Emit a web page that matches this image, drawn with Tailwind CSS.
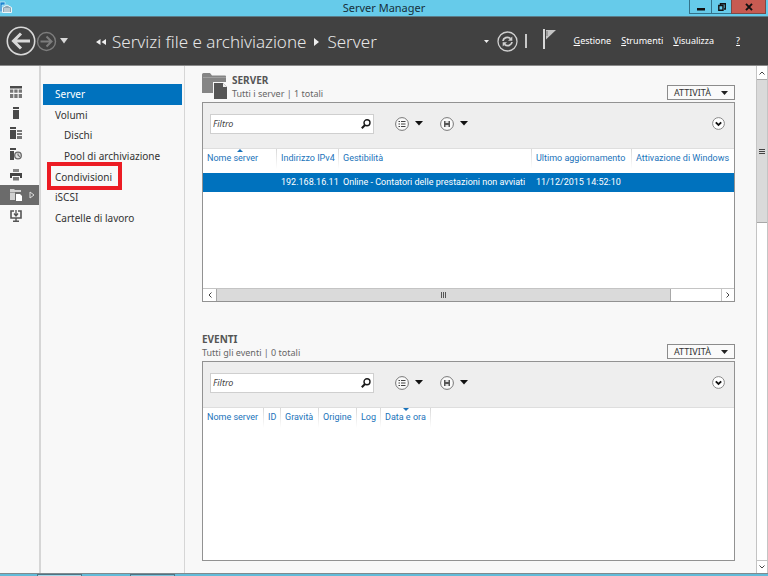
<!DOCTYPE html>
<html lang="it">

<head>
    <meta charset="UTF-8">
    <meta name="viewport" content="width=device-width, initial-scale=1.0">
    <title>Server Manager</title>
    <script src="https://cdn.jsdelivr.net/npm/@tailwindcss/browser@4"></script>
</head>

<body class="h-screen flex flex-col overflow-hidden bg-[#f8f8f8] font-['Noto_Sans',sans-serif] text-[9px] text-[#333]">

    <!-- Title bar -->
    <div class="relative h-4 shrink-0 flex items-start justify-between bg-[#66cbea]">
        <svg class="w-3 h-4" viewBox="0 0 12 16">
            <path d="M0 2h5v3H2v7H0z" fill="#1c86d1" stroke="#e8f6fc" stroke-width=".6"/>
            <path d="M2.500 7.500 7 5l4.500 2.500v5h-9z" fill="#8fa6b3" stroke="#eef7fb"/>
            <path d="M4 9h6M4 11h6" stroke="#e4edf2"/>
        </svg>
        <h1 class="absolute inset-x-0 top-0 text-center text-[11px] leading-4 text-[#16303a]">Server Manager</h1>
        <div class="relative flex h-[14px] mr-[2px]">
            <button aria-label="Riduci a icona" class="w-[23px] flex items-center justify-center border border-t-0 border-[#33728a]">
                <svg class="w-2 h-2" viewBox="0 0 8 8"><path d="M0 5h8v2.500H0z" fill="#111"/></svg>
            </button>
            <button aria-label="Ripristina" class="w-[19px] flex items-center justify-center border-b border-[#33728a]">
                <svg class="w-2 h-2" viewBox="0 0 8 8"><path d="M2.500 2V.7h4.800V6H6M.8 2.500H5v4.700H.8z" fill="none" stroke="#111" stroke-width="1.400"/></svg>
            </button>
            <button aria-label="Chiudi" class="w-[35px] flex items-center justify-center border border-t-0 border-[#7c4a48] bg-[#c75b52]">
                <svg class="w-2 h-2" viewBox="0 0 8 8"><path d="m1 .8 6 6.400M7 .8 1 7.200" stroke="#111" stroke-width="1.900"/></svg>
            </button>
        </div>
    </div>

    <!-- Header -->
    <header class="h-[50px] shrink-0 flex items-center border-t border-b border-t-[#5b7c88] border-b-[#8a8a8a] bg-[#414141] text-[#e6e6e6]">
        <button aria-label="Indietro" class="ml-[6px]">
            <svg class="w-[30px] h-[30px]" viewBox="0 0 30 30" fill="none" stroke="#d8d8d8">
                <circle cx="15" cy="15" r="13.700" stroke-width="1.600"/>
                <path d="M24 15H8M15 7.500 7.500 15l7.500 7.500" stroke-width="3"/>
            </svg>
        </button>
        <button aria-label="Avanti">
            <svg class="w-[21px] h-[21px]" viewBox="0 0 21 21" fill="none" stroke="#7d7d7d">
                <circle cx="10.500" cy="10.500" r="9" stroke-width="1.400"/>
                <path d="M4.500 10.500h11M10.500 5.500l5 5-5 5" stroke-width="2"/>
            </svg>
        </button>
        <button aria-label="Cronologia" class="ml-[3px]">
            <svg class="w-2 h-[6px]" viewBox="0 0 8 6"><path d="M0 0h8L4 5.500z" fill="#d8d8d8"/></svg>
        </button>
        <nav class="ml-7 pt-[2px] flex items-center text-[17px] font-light whitespace-nowrap">
            <svg class="w-[10px] h-2 mr-[6px]" viewBox="0 0 10 8"><path d="M4.500 1v6L0 4zM10 1v6L5.500 4z" fill="#eee"/></svg>
            <a href="#">Servizi file e archiviazione</a>
            <svg class="w-[5px] h-2 mx-2" viewBox="0 0 5 8"><path d="M0 0v8l5-4z" fill="#eee"/></svg>
            <a href="#">Server</a>
        </nav>
        <div class="ml-auto flex items-center">
            <button aria-label="Altri percorsi" class="mr-2">
                <svg class="w-[5px] h-[3px]" viewBox="0 0 5 3"><path d="M0 0h5L2.500 3z" fill="#eee"/></svg>
            </button>
            <button aria-label="Aggiorna">
                <svg class="w-[21px] h-[21px]" viewBox="0 0 21 21" fill="none" stroke="#d0d0d0">
                    <circle cx="10.500" cy="10.500" r="9.500" stroke-width="1.300"/>
                    <path d="M6 10c.3-3 4.500-5 7.500-2.300M15 11c-.3 3-4.500 5-7.500 2.300" stroke-width="1.800"/>
                    <path d="M15.300 5.500v4.300H11zM5.700 15.500v-4.300H10z" fill="#d0d0d0" stroke="none"/>
                </svg>
            </button>
            <span class="w-[2px] h-[14px] ml-[7px] mr-4 bg-[#c8c8c8]"></span>
            <button aria-label="Notifiche">
                <svg class="w-[13px] h-5 -mt-1" viewBox="0 0 13 20"><path d="M0 0h2v20H0z" fill="#d8d8d8"/><path d="M3 1h10L3 10.500z" fill="#c4c4c4"/><path d="M4 2v5" stroke="#777" stroke-width="1"/></svg>
            </button>
            <div class="ml-[18px] mr-7 flex gap-[10px] text-white">
                <button><u>G</u>estione</button>
                <button><u>S</u>trumenti</button>
                <button><u>V</u>isualizza</button>
                <button class="ml-3 underline">?</button>
            </div>
        </div>
    </header>

    <div class="flex-1 min-h-0 flex">

        <!-- Icon rail -->
        <aside class="w-[41px] shrink-0 pt-4 border-r-2 border-[#d6d6d6]">
            <div class="h-36 grid grid-rows-7">
                <a href="#" aria-label="Dashboard" class="flex items-center pl-[10px]">
                    <svg class="w-3 h-3" viewBox="0 0 12 12"><path d="M0 0h12v2.500H0z" fill="#4a4a4a"/><path d="M0 3.500h3.300v3.300H0zM4.300 3.500h3.300v3.300H4.300zM8.700 3.500H12v3.300H8.700zM0 8h3.300v4H0zM4.300 8h3.300v4H4.300zM8.700 8H12v4H8.700z" fill="#777"/></svg>
                </a>
                <a href="#" aria-label="Server locale" class="flex items-center pl-[10px]">
                    <svg class="w-3 h-3" viewBox="0 0 12 12" fill="#4a4a4a"><path d="M3 0h6v2H3zM3 3h6v9H3z"/></svg>
                </a>
                <a href="#" aria-label="Tutti i server" class="flex items-center pl-[10px]">
                    <svg class="w-3 h-3" viewBox="0 0 12 12"><path d="M0 0h6v2H0zM0 3h6v9H0z" fill="#4a4a4a"/><path d="M7 3h5v2H7zM7 6h5v2H7zM7 9h5v3H7z" fill="#777"/></svg>
                </a>
                <a href="#" aria-label="Servizi" class="flex items-center pl-[10px]">
                    <svg class="w-3 h-3" viewBox="0 0 12 12"><path d="M0 0h6v2H0zM0 3h4v9H0z" fill="#4a4a4a"/><circle cx="8" cy="7.500" r="3.300" fill="#ddd" stroke="#666" stroke-width="1.300"/><path d="M8 7.500V5.500M8 7.500l2 1" stroke="#555"/></svg>
                </a>
                <a href="#" aria-label="Servizi di stampa" class="flex items-center pl-[10px]">
                    <svg class="w-3 h-3" viewBox="0 0 12 12"><path d="M3 0h6v3H3z" fill="#888"/><path d="M0 4h12v5h-2V7H2v2H0z" fill="#444"/><path d="M3 8h6v3.500H3z" fill="#777"/></svg>
                </a>
                <a href="#" aria-label="Servizi file e archiviazione" class="flex items-center justify-between pl-[10px] pr-1 bg-[#6b6b6b]">
                    <svg class="w-3 h-3" viewBox="0 0 12 12"><path d="M0 0h4l1 1h6v2H0zM0 3.500h5V11H0z" fill="#d0d0d0"/><path d="M6 5h4l2 2v5H6z" fill="#fff"/></svg>
                    <svg class="w-[6px] h-2" viewBox="0 0 6 8"><path d="M1 1v6l4-3z" fill="none" stroke="#ddd"/></svg>
                </a>
                <a href="#" aria-label="Windows Server Update" class="flex items-center pl-[10px]">
                    <svg class="w-3 h-3" viewBox="0 0 12 12" fill="none" stroke="#555"><path d="M4 1H1v7h10V1H8" stroke-width="1.600"/><path d="M6 0v5M4 3.500 6 6l2-2.500" stroke-width="1.300"/><path d="M6 8v3M3 11.300h6" stroke-width="1.400"/></svg>
                </a>
            </div>
        </aside>

        <!-- Section menu -->
        <nav class="w-36 shrink-0 pt-[18px] border-r border-[#d6d6d6] text-[10px] whitespace-nowrap">
            <ul class="h-36 grid grid-rows-7 px-[2px] *:pt-px">
                <li class="flex items-center pl-3 bg-[#0072be] text-white"><a href="#">Server</a></li>
                <li class="flex items-center pl-3"><a href="#">Volumi</a></li>
                <li class="flex items-center pl-[21px]"><a href="#">Dischi</a></li>
                <li class="flex items-center pl-[21px]"><a href="#">Pool di archiviazione</a></li>
                <li class="relative flex items-center pl-3">
                    <a href="#">Condivisioni</a>
                    <span class="absolute left-1 -top-1 w-[75px] h-7 border-4 border-[#ec1c24]"></span>
                </li>
                <li class="flex items-center pl-3"><a href="#">iSCSI</a></li>
                <li class="flex items-center pl-3"><a href="#">Cartelle di lavoro</a></li>
            </ul>
        </nav>

        <!-- Content -->
        <main class="flex-1 min-w-0 flex flex-col pl-[17px] pr-[21px] pt-[7px] pb-3">

            <section>
                <div class="h-[29px] flex justify-between">
                    <div class="flex gap-[5px]">
                        <svg class="w-[25px] h-[26px]" viewBox="0 0 25 26"><path d="M0 1.500Q0 0 1.500 0H8l2 2.500h13q1 0 1 1V9H11v11H0z" fill="#858585"/><path d="M1 4.500h23" stroke="#a6a6a6" stroke-width=".8"/><path d="M12 10h9l4 4v12H12z" fill="#555"/><path d="M21 10v4h4z" fill="#eee"/></svg>
                        <div>
                            <h2 class="text-[10px] leading-[14px] font-bold text-[#555]">SERVER</h2>
                            <p class="leading-[13px] text-[#666]">Tutti i server | 1 totali</p>
                        </div>
                    </div>
                    <button class="w-[68px] h-[15px] mt-3 px-[6px] flex items-center justify-between border border-[#8c8c8c] bg-[#fafafa]">
                        ATTIVITÀ
                        <svg class="w-[7px] h-1" viewBox="0 0 7 4"><path d="M0 0h7L3.500 4z" fill="#222"/></svg>
                    </button>
                </div>

                <div class="h-[200px] flex flex-col border border-[#929292] bg-white">
                    <div class="h-[46px] shrink-0 pl-[7px] pr-[9px] pb-1 flex items-center border-b border-[#dedede] bg-[#eeeeee]">
                        <label class="w-[164px] h-5 px-[2px] flex items-center border border-[#cfcfcf] bg-white">
                            <input type="text" placeholder="Filtro" aria-label="Filtro server" class="flex-1 min-w-0 italic outline-none placeholder:text-[#444]">
                            <svg class="w-[10px] h-[10px]" viewBox="0 0 10 10" fill="none" stroke="#1a1a1a"><circle cx="6" cy="3.800" r="3" stroke-width="1.400"/><path d="M4 6 .8 9.200" stroke-width="2"/></svg>
                        </label>
                        <button aria-label="Elenco" class="ml-[21px] flex items-center gap-[6px]">
                            <svg class="w-[14px] h-[14px]" viewBox="0 0 14 14"><circle cx="7" cy="7" r="6.400" fill="#fafafa" stroke="#777"/><path d="M3.500 4.500h1.500M6 4.500h4.500M3.500 7h1.500M6 7h4.500M3.500 9.500h1.500M6 9.500h4.500" stroke="#444" stroke-width="1.200"/></svg>
                            <svg class="w-[8px] h-[5px]" viewBox="0 0 8 5"><path d="M0 0h8L4 4.500z" fill="#111"/></svg>
                        </button>
                        <button aria-label="Salva" class="ml-[17px] flex items-center gap-[6px]">
                            <svg class="w-[14px] h-[14px]" viewBox="0 0 14 14"><circle cx="7" cy="7" r="6.400" fill="#fafafa" stroke="#777"/><path d="M4 4h6v6H4z" fill="#555"/><path d="M5.500 4h3v2h-3zM5.500 8h3v2h-3z" fill="#ddd"/></svg>
                            <svg class="w-[8px] h-[5px]" viewBox="0 0 8 5"><path d="M0 0h8L4 4.500z" fill="#111"/></svg>
                        </button>
                        <button aria-label="Espandi criteri" class="ml-auto">
                            <svg class="w-[13px] h-[13px]" viewBox="0 0 13 13" fill="none"><circle cx="6.500" cy="6.500" r="5.900" fill="#fff" stroke="#888"/><path d="m3.800 5.300 2.700 2.700 2.700-2.700" stroke="#111" stroke-width="1.800"/></svg>
                        </button>
                    </div>
                    <div class="flex-1 min-h-0 overflow-hidden font-[Roboto,sans-serif]">
                        <table class="w-full table-fixed text-left whitespace-nowrap">
                            <colgroup>
                                <col class="w-[74px]"><col class="w-[62px]"><col class="w-[193px]"><col class="w-[100px]"><col>
                            </colgroup>
                            <thead>
                                <tr class="h-6 text-[#1a73ba] *:p-0 *:pl-1 *:pb-1 *:font-normal">
                                    <th class="relative bg-linear-to-b from-[#d8d8d8] to-white bg-[length:1px_20px] bg-right-top bg-no-repeat">
                                        Nome server
                                        <svg class="absolute left-[34px] top-0 w-[6px] h-[3px]" viewBox="0 0 6 3"><path d="M3 0l3 3H0z" fill="#1a73ba"/></svg>
                                    </th>
                                    <th class="bg-linear-to-b from-[#d8d8d8] to-white bg-[length:1px_20px] bg-right-top bg-no-repeat">Indirizzo IPv4</th>
                                    <th class="bg-linear-to-b from-[#d8d8d8] to-white bg-[length:1px_20px] bg-right-top bg-no-repeat">Gestibilità</th>
                                    <th class="bg-linear-to-b from-[#d8d8d8] to-white bg-[length:1px_20px] bg-right-top bg-no-repeat">Ultimo aggiornamento</th>
                                    <th>Attivazione di Windows</th>
                                </tr>
                            </thead>
                            <tbody>
                                <tr class="h-[19px] bg-[#0072be] text-white *:p-0 *:pl-1">
                                    <td></td>
                                    <td>192.168.16.11</td>
                                    <td>Online - Contatori delle prestazioni non avviati</td>
                                    <td>11/12/2015 14:52:10</td>
                                    <td></td>
                                </tr>
                            </tbody>
                        </table>
                    </div>
                    <div class="h-[13px] shrink-0 flex border-t border-[#c4c4c4]">
                        <button aria-label="Scorri a sinistra" class="w-[13px] flex items-center justify-center">
                            <svg class="w-1 h-[6px]" viewBox="0 0 4 6"><path d="M3.500.5 1 3l2.500 2.500" fill="none" stroke="#444"/></svg>
                        </button>
                        <div class="flex-1">
                            <div class="w-9/10 h-full flex items-center justify-center gap-px border-x border-[#a8a8a8] bg-[#dadada]">
                                <span class="w-px h-[6px] bg-[#555]"></span>
                                <span class="w-px h-[6px] bg-[#555]"></span>
                                <span class="w-px h-[6px] bg-[#555]"></span>
                            </div>
                        </div>
                        <button aria-label="Scorri a destra" class="w-[13px] flex items-center justify-center border-l border-[#c4c4c4]">
                            <svg class="w-1 h-[6px]" viewBox="0 0 4 6"><path d="M.5.5 3 3 .5 5.500" fill="none" stroke="#444"/></svg>
                        </button>
                    </div>
                </div>
            </section>

            <section class="mt-[30px] flex-1 min-h-0 flex flex-col">
                <div class="h-[29px] shrink-0 flex justify-between">
                    <div>
                        <h2 class="text-[10px] leading-[14px] font-bold text-[#555]">EVENTI</h2>
                        <p class="leading-[13px] text-[#666]">Tutti gli eventi | 0 totali</p>
                    </div>
                    <button class="w-[68px] h-[15px] mt-3 px-[6px] flex items-center justify-between border border-[#8c8c8c] bg-[#fafafa]">
                        ATTIVITÀ
                        <svg class="w-[7px] h-1" viewBox="0 0 7 4"><path d="M0 0h7L3.500 4z" fill="#222"/></svg>
                    </button>
                </div>

                <div class="flex-1 min-h-0 flex flex-col border border-[#929292] bg-white">
                    <div class="h-[46px] shrink-0 pl-[7px] pr-[9px] pb-1 flex items-center border-b border-[#dedede] bg-[#eeeeee]">
                        <label class="w-[164px] h-5 px-[2px] flex items-center border border-[#cfcfcf] bg-white">
                            <input type="text" placeholder="Filtro" aria-label="Filtro eventi" class="flex-1 min-w-0 italic outline-none placeholder:text-[#444]">
                            <svg class="w-[10px] h-[10px]" viewBox="0 0 10 10" fill="none" stroke="#1a1a1a"><circle cx="6" cy="3.800" r="3" stroke-width="1.400"/><path d="M4 6 .8 9.200" stroke-width="2"/></svg>
                        </label>
                        <button aria-label="Elenco" class="ml-[21px] flex items-center gap-[6px]">
                            <svg class="w-[14px] h-[14px]" viewBox="0 0 14 14"><circle cx="7" cy="7" r="6.400" fill="#fafafa" stroke="#777"/><path d="M3.500 4.500h1.500M6 4.500h4.500M3.500 7h1.500M6 7h4.500M3.500 9.500h1.500M6 9.500h4.500" stroke="#444" stroke-width="1.200"/></svg>
                            <svg class="w-[8px] h-[5px]" viewBox="0 0 8 5"><path d="M0 0h8L4 4.500z" fill="#111"/></svg>
                        </button>
                        <button aria-label="Salva" class="ml-[17px] flex items-center gap-[6px]">
                            <svg class="w-[14px] h-[14px]" viewBox="0 0 14 14"><circle cx="7" cy="7" r="6.400" fill="#fafafa" stroke="#777"/><path d="M4 4h6v6H4z" fill="#555"/><path d="M5.500 4h3v2h-3zM5.500 8h3v2h-3z" fill="#ddd"/></svg>
                            <svg class="w-[8px] h-[5px]" viewBox="0 0 8 5"><path d="M0 0h8L4 4.500z" fill="#111"/></svg>
                        </button>
                        <button aria-label="Espandi criteri" class="ml-auto">
                            <svg class="w-[13px] h-[13px]" viewBox="0 0 13 13" fill="none"><circle cx="6.500" cy="6.500" r="5.900" fill="#fff" stroke="#888"/><path d="m3.800 5.300 2.700 2.700 2.700-2.700" stroke="#111" stroke-width="1.800"/></svg>
                        </button>
                    </div>
                    <table class="w-full table-fixed text-left whitespace-nowrap font-[Roboto,sans-serif]">
                        <colgroup>
                            <col class="w-[61px]"><col class="w-[17px]"><col class="w-[38px]"><col class="w-[38px]"><col class="w-[24px]"><col class="w-[50px]"><col>
                        </colgroup>
                        <thead>
                            <tr class="h-6 text-[#1a73ba] *:p-0 *:pl-1 *:pb-1 *:font-normal">
                                <th class="bg-linear-to-b from-[#d8d8d8] to-white bg-[length:1px_20px] bg-right-top bg-no-repeat">Nome server</th>
                                <th class="bg-linear-to-b from-[#d8d8d8] to-white bg-[length:1px_20px] bg-right-top bg-no-repeat">ID</th>
                                <th class="bg-linear-to-b from-[#d8d8d8] to-white bg-[length:1px_20px] bg-right-top bg-no-repeat">Gravità</th>
                                <th class="bg-linear-to-b from-[#d8d8d8] to-white bg-[length:1px_20px] bg-right-top bg-no-repeat">Origine</th>
                                <th class="bg-linear-to-b from-[#d8d8d8] to-white bg-[length:1px_20px] bg-right-top bg-no-repeat">Log</th>
                                <th class="relative bg-linear-to-b from-[#d8d8d8] to-white bg-[length:1px_20px] bg-right-top bg-no-repeat">
                                    Data e ora
                                    <svg class="absolute left-[22px] top-0 w-[6px] h-[3px]" viewBox="0 0 6 3"><path d="M0 0h6L3 3z" fill="#1a73ba"/></svg>
                                </th>
                                <td></td>
                            </tr>
                        </thead>
                    </table>
                </div>
            </section>
        </main>

        <!-- Page scrollbar -->
        <div class="w-3 shrink-0 flex flex-col border-x border-[#c4c4c4] bg-white">
            <button aria-label="Scorri su" class="h-[13px] shrink-0 flex items-center justify-center">
                <svg class="w-[6px] h-1" viewBox="0 0 6 4"><path d="M.5 3.500 3 1l2.500 2.500" fill="none" stroke="#444"/></svg>
            </button>
            <div class="flex-1">
                <div class="h-3/10 flex flex-col items-center justify-center gap-px border-y border-[#a8a8a8] bg-[#dadada]">
                    <span class="w-[6px] h-px bg-[#444]"></span>
                    <span class="w-[6px] h-px bg-[#444]"></span>
                    <span class="w-[6px] h-px bg-[#444]"></span>
                </div>
            </div>
            <button aria-label="Scorri giù" class="h-[13px] shrink-0 flex items-center justify-center border-t border-[#c4c4c4]">
                <svg class="w-[6px] h-1" viewBox="0 0 6 4"><path d="M.5.5 3 3 5.500.5" fill="none" stroke="#444"/></svg>
            </button>
        </div>
    </div>

    <!-- Top edge of the taskbar -->
    <footer class="h-[3px] shrink-0 flex border-t border-[#808a8e] bg-[#62bbd9]">
        <span class="ml-[37px] w-[45px] border border-b-0 border-[#4c7486] bg-[#a6d8e8]"></span>
        <span class="ml-12 w-[45px] border border-b-0 border-[#4c7486] bg-[#7cc3da]"></span>
    </footer>

</body>

</html>
